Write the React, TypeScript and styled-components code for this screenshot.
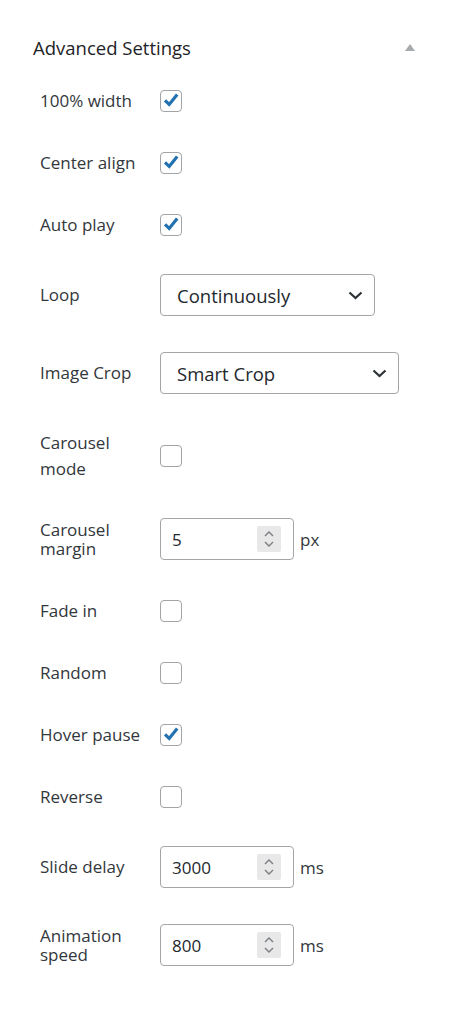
import React from "react";
import styled, { createGlobalStyle } from "styled-components";

const GlobalStyle = createGlobalStyle`
  html, body { margin: 0; padding: 0; background: #ffffff; }
  body { font-family: "Open Sans", "Noto Sans", "Liberation Sans", sans-serif; -webkit-font-smoothing: antialiased; }
  * { box-sizing: border-box; }
`;

const Panel = styled.div`
  width: 460px;
  padding: 28px 0 40px 0;
  background: #ffffff;
`;

const Header = styled.div`
  display: flex;
  align-items: center;
  justify-content: space-between;
  padding: 0 45px 0 33px;
  height: 40px;
  margin-bottom: 2px;
`;

const Title = styled.h2`
  margin: 0;
  font-size: 18.5px;
  font-weight: 400;
  line-height: 40px;
  color: #1d2327;
`;

const Toggle = styled.span`
  width: 0;
  height: 0;
  border-left: 5px solid transparent;
  border-right: 5px solid transparent;
  border-bottom: 7px solid #a7aaad;
  margin-top: -1px;
`;

const Rows = styled.div`
  display: flex;
  flex-direction: column;
`;

const Row = styled.div<{ $extra?: number }>`
  display: flex;
  align-items: center;
  padding: 18px 0 ${(p) => 18 + (p.$extra || 0)}px 40px;
`;

const Label = styled.label<{ $compact?: boolean }>`
  width: 120px;
  flex: none;
  padding-right: 10px;
  font-size: 17px;
  line-height: ${(p) => (p.$compact ? "19px" : "26px")};
  color: #32373c;
`;

const Field = styled.div`
  display: flex;
  align-items: center;
  gap: 6px;
`;

const CheckBox = styled.span`
  display: inline-flex;
  align-items: center;
  justify-content: center;
  width: 22px;
  height: 22px;
  border: 1px solid #a2a4a8;
  border-radius: 4px;
  background: #ffffff;
`;

const SelectBox = styled.div<{ $width: number }>`
  display: flex;
  align-items: center;
  justify-content: space-between;
  width: ${(p) => p.$width}px;
  height: 42px;
  padding: 0 11px 0 16px;
  border: 1px solid #a3a5a8;
  border-radius: 4px;
  background: #ffffff;
  font-size: 18.5px;
  color: #23282d;
`;

const NumberBox = styled.div`
  display: flex;
  align-items: center;
  justify-content: space-between;
  width: 134px;
  height: 42px;
  padding: 0 12px 0 11px;
  border: 1px solid #a3a5a8;
  border-radius: 4px;
  background: #ffffff;
  font-size: 17px;
  color: #23282d;
`;

const Spinner = styled.span`
  display: flex;
  align-items: center;
  justify-content: center;
  width: 24px;
  height: 26px;
  border-radius: 2px;
  background: #e8e8e9;
`;

const Unit = styled.span`
  font-size: 17px;
  color: #32373c;
`;

const Check = ({ checked }: { checked: boolean }) => (
  <CheckBox>
    {checked && (
      <svg width="18" height="18" viewBox="0 0 18 18" style={{ marginTop: -3, marginLeft: -1 }}>
        <path d="M3 9.4 L7.2 13.4 L15.2 3.4" fill="none" stroke="#2271b1" strokeWidth="3.2" strokeLinecap="butt" strokeLinejoin="miter" />
      </svg>
    )}
  </CheckBox>
);

const Chevron = () => (
  <svg width="15" height="9" viewBox="0 0 15 9">
    <path d="M1.5 1.5 L7.5 7 L13.5 1.5" fill="none" stroke="#2c3338" strokeWidth="2.2" />
  </svg>
);

const SpinIcon = () => (
  <svg width="12" height="20" viewBox="0 0 12 20">
    <path d="M2 7 L6 3 L10 7" fill="none" stroke="#7a7d80" strokeWidth="1.4" />
    <path d="M2 13 L6 17 L10 13" fill="none" stroke="#7a7d80" strokeWidth="1.4" />
  </svg>
);

type Item =
  | { kind: "check"; label: string; checked: boolean; compact?: boolean }
  | { kind: "select"; label: string; value: string; width: number }
  | { kind: "number"; label: string; value: string; unit: string; compact?: boolean; extra?: number };

const items: Item[] = [
  { kind: "check", label: "100% width", checked: true },
  { kind: "check", label: "Center align", checked: true },
  { kind: "check", label: "Auto play", checked: true },
  { kind: "select", label: "Loop", value: "Continuously", width: 215 },
  { kind: "select", label: "Image Crop", value: "Smart Crop", width: 239 },
  { kind: "check", label: "Carousel mode", checked: false },
  { kind: "number", label: "Carousel margin", value: "5", unit: "px", compact: true, extra: 2 },
  { kind: "check", label: "Fade in", checked: false },
  { kind: "check", label: "Random", checked: false },
  { kind: "check", label: "Hover pause", checked: true },
  { kind: "check", label: "Reverse", checked: false },
  { kind: "number", label: "Slide delay", value: "3000", unit: "ms" },
  { kind: "number", label: "Animation speed", value: "800", unit: "ms", compact: true },
];

export default function App() {
  return (
    <>
      <GlobalStyle />
      <Panel>
        <Header>
          <Title>Advanced Settings</Title>
          <Toggle />
        </Header>
        <Rows>
          {items.map((it) => (
            <Row key={it.label} $extra={it.kind === "number" ? it.extra : 0}>
              <Label $compact={"compact" in it ? it.compact : false}>{it.label}</Label>
              <Field>
                {it.kind === "check" && <Check checked={it.checked} />}
                {it.kind === "select" && (
                  <SelectBox $width={it.width}>
                    <span>{it.value}</span>
                    <Chevron />
                  </SelectBox>
                )}
                {it.kind === "number" && (
                  <>
                    <NumberBox>
                      <span>{it.value}</span>
                      <Spinner>
                        <SpinIcon />
                      </Spinner>
                    </NumberBox>
                    <Unit>{it.unit}</Unit>
                  </>
                )}
              </Field>
            </Row>
          ))}
        </Rows>
      </Panel>
    </>
  );
}
